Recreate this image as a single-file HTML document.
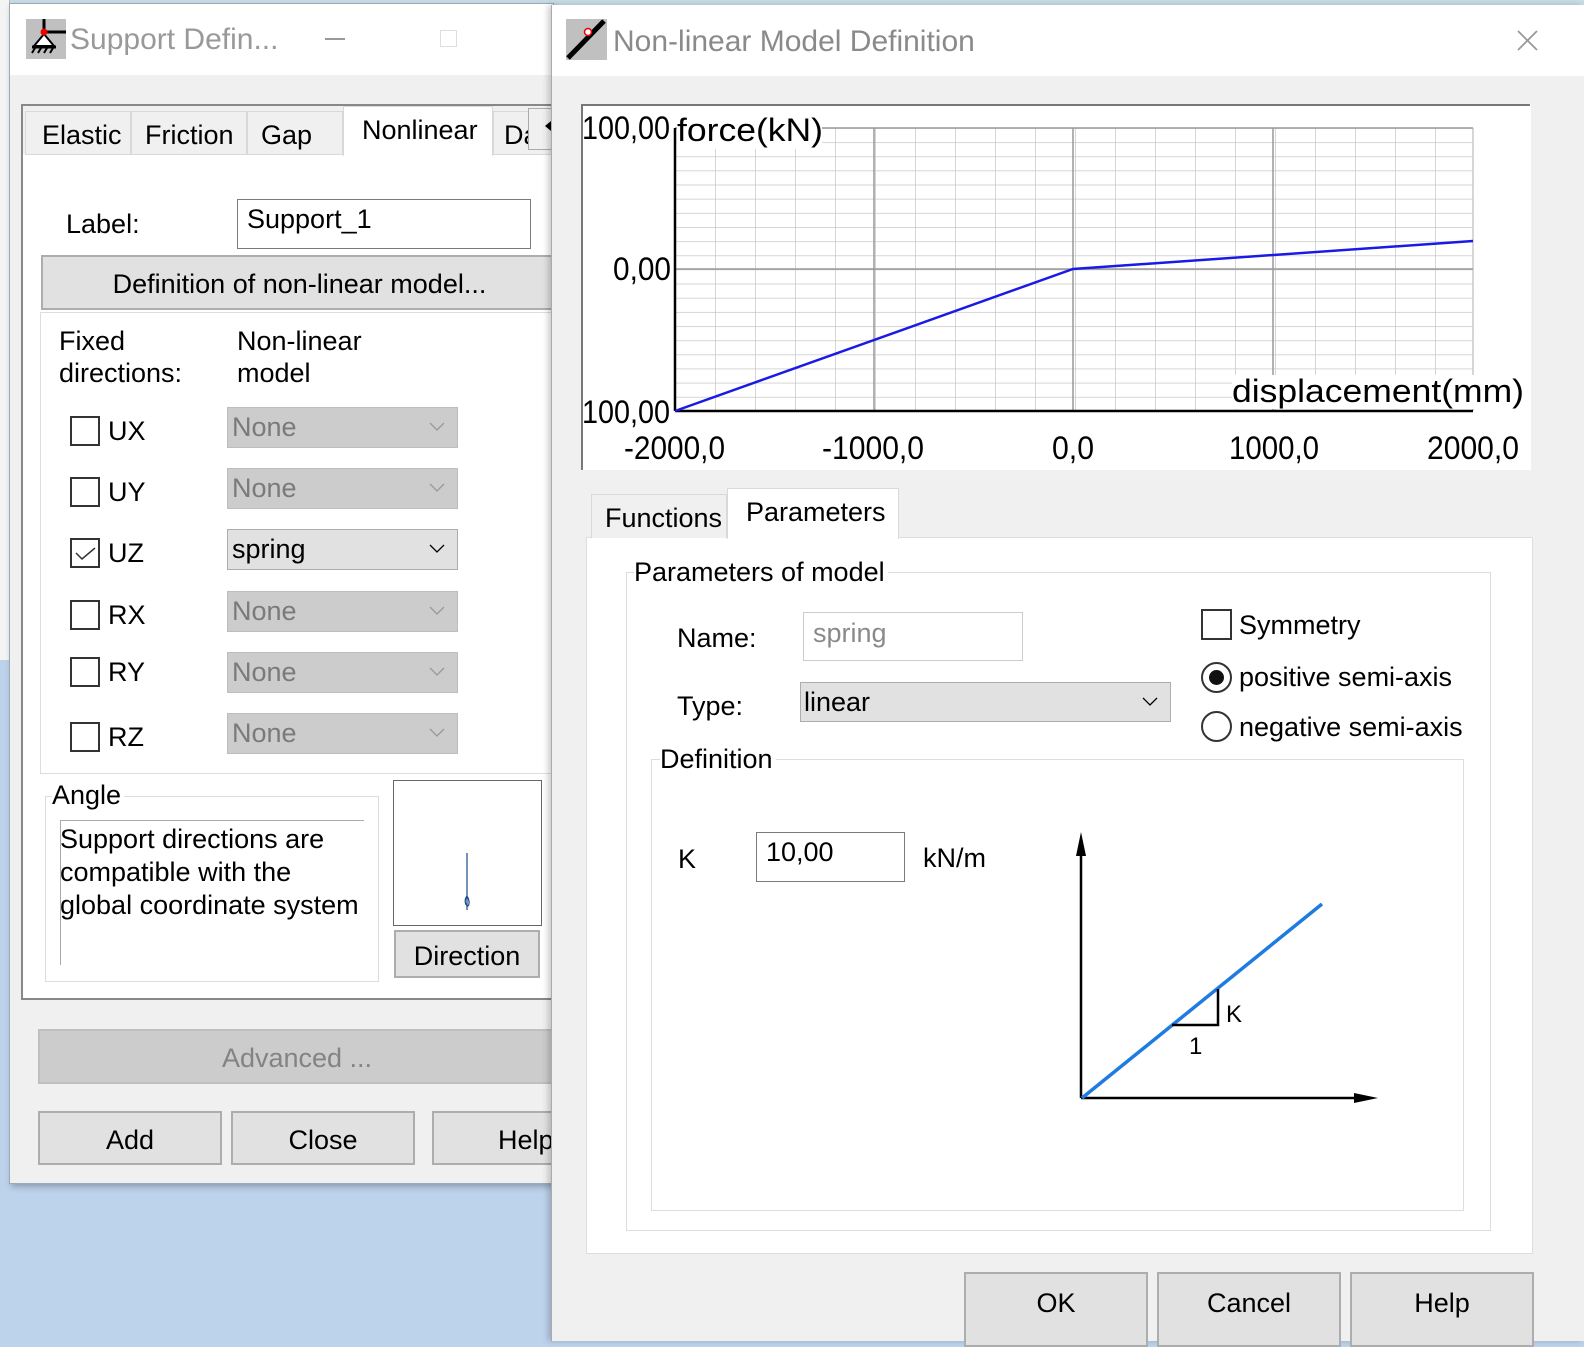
<!DOCTYPE html>
<html><head><meta charset="utf-8">
<style>
*{box-sizing:border-box;margin:0;padding:0}
body{width:1584px;height:1341px;position:relative;overflow:hidden;background:#bdd3ec;font-family:"Liberation Sans",sans-serif;font-size:27px;color:#000}
.a{position:absolute}
.t{position:absolute;white-space:nowrap;line-height:1}
.btn{position:absolute;background:#e1e1e1;border:2px solid #adadad;text-align:center}
.cb{position:absolute;width:30px;height:30px;border:2px solid #333;background:#fff}
.dd{position:absolute;width:231px;height:41px;background:#cccccc;border:1px solid #bdbdbd;color:#7a7a7a;font-size:27px;padding:4px 4px}
.dd svg{position:absolute;right:12px;top:14px}
</style></head><body>
<div class="a" style="left:0;top:0;width:1584px;height:6px;background:#c9dde6"></div>
<div class="a" style="left:0;top:0;width:10px;height:660px;background:#f4f4f4;border-right:1px solid #bbb"></div>

<div class="a" style="left:9px;top:3px;width:545px;height:1181px;background:#f0f0f0;border:1px solid #9ab;box-shadow:2px 3px 6px rgba(0,0,0,.25)"></div>
<div class="a" style="left:10px;top:4px;width:542px;height:71px;background:#fff"></div>
<svg class="a" style="left:26px;top:19px" width="40" height="40" viewBox="0 0 40 40"><rect width="40" height="40" fill="#c0c0c0"/><path d="M18 0V14M18 13H40" stroke="#000" stroke-width="3"/><path d="M8 27L18 15 28 27Z" fill="#fff" stroke="#000" stroke-width="2"/><path d="M6 28H30" stroke="#000" stroke-width="3"/><path d="M9 29l-3 5M15 29l-3 5M21 29l-3 5M27 29l-3 5" stroke="#000" stroke-width="2"/><circle cx="18" cy="13" r="3.5" fill="#e00"/></svg>
<div class="t" style="left:70px;top:25px;font-size:30px;color:#999">Support Defin...</div>
<div class="a" style="left:325px;top:38px;width:20px;height:2px;background:#999"></div>
<div class="a" style="left:440px;top:30px;width:17px;height:17px;border:1px solid #ddd"></div>

<div class="a" style="left:21px;top:104px;width:533px;height:896px;border:2px solid #888;border-right:none;background:#fff"></div>
<div class="a" style="left:23px;top:106px;width:531px;height:48px;background:#f0f0f0"></div>
<div class="a" style="left:25px;top:111px;width:106px;height:44px;background:#f0f0f0;border:1px solid #d9d9d9"></div>
<div class="a" style="left:131px;top:111px;width:116px;height:44px;background:#f0f0f0;border:1px solid #d9d9d9"></div>
<div class="a" style="left:247px;top:111px;width:96px;height:44px;background:#f0f0f0;border:1px solid #d9d9d9"></div>
<div class="a" style="left:343px;top:106px;width:150px;height:50px;background:#fff;border:1px solid #d9d9d9;border-bottom:none"></div>
<div class="a" style="left:493px;top:111px;width:61px;height:44px;background:#f0f0f0;border:1px solid #d9d9d9"></div>
<div class="a" style="left:528px;top:108px;width:26px;height:42px;background:#f0f0f0;border:1px solid #aaa"></div>
<div class="a" style="left:545px;top:121px;width:0;height:0;border:5px solid transparent;border-right:6px solid #000;border-left:none"></div>
<div class="t" style="left:42px;top:122px">Elastic</div>
<div class="t" style="left:145px;top:122px">Friction</div>
<div class="t" style="left:261px;top:122px">Gap</div>
<div class="t" style="left:362px;top:117px">Nonlinear</div>
<div class="t" style="left:504px;top:122px;width:24px;overflow:hidden">Da</div>

<div class="t" style="left:66px;top:211px">Label:</div>
<div class="a" style="left:237px;top:199px;width:294px;height:50px;border:1px solid #7a7a7a;background:#fff"></div>
<div class="t" style="left:247px;top:206px">Support_1</div>
<div class="btn" style="left:41px;top:255px;width:515px;height:55px;border-right:none"><div style="margin-top:12px">Definition of non-linear model...</div></div>

<div class="a" style="left:40px;top:312px;width:516px;height:462px;border:1px solid #ddd;border-right:none"></div>
<div class="t" style="left:59px;top:325px;line-height:32px">Fixed<br>directions:</div>
<div class="t" style="left:237px;top:325px;line-height:32px">Non-linear<br>model</div>

<div class="cb" style="left:70px;top:416px"></div><div class="t" style="left:108px;top:418px">UX</div>
<div class="dd" style="left:227px;top:407px">None<svg width="16" height="9"><path d="M1 1l7 7 7-7" fill="none" stroke="#999" stroke-width="1.3"/></svg></div>
<div class="cb" style="left:70px;top:477px"></div><div class="t" style="left:108px;top:479px">UY</div>
<div class="dd" style="left:227px;top:468px">None<svg width="16" height="9"><path d="M1 1l7 7 7-7" fill="none" stroke="#999" stroke-width="1.3"/></svg></div>
<div class="cb" style="left:70px;top:538px"><svg width="26" height="26" style="position:absolute;left:0;top:0"><path d="M4 13l6 6 13-11" fill="none" stroke="#333" stroke-width="1.5"/></svg></div><div class="t" style="left:108px;top:540px">UZ</div>
<div class="dd" style="left:227px;top:529px;background:#e1e1e1;border-color:#adadad;color:#000">spring<svg width="16" height="9"><path d="M1 1l7 7 7-7" fill="none" stroke="#000" stroke-width="1.3"/></svg></div>
<div class="cb" style="left:70px;top:600px"></div><div class="t" style="left:108px;top:602px">RX</div>
<div class="dd" style="left:227px;top:591px">None<svg width="16" height="9"><path d="M1 1l7 7 7-7" fill="none" stroke="#999" stroke-width="1.3"/></svg></div>
<div class="cb" style="left:70px;top:657px"></div><div class="t" style="left:108px;top:659px">RY</div>
<div class="dd" style="left:227px;top:652px">None<svg width="16" height="9"><path d="M1 1l7 7 7-7" fill="none" stroke="#999" stroke-width="1.3"/></svg></div>
<div class="cb" style="left:70px;top:722px"></div><div class="t" style="left:108px;top:724px">RZ</div>
<div class="dd" style="left:227px;top:713px">None<svg width="16" height="9"><path d="M1 1l7 7 7-7" fill="none" stroke="#999" stroke-width="1.3"/></svg></div>

<div class="a" style="left:45px;top:796px;width:334px;height:186px;border:1px solid #ddd"></div>
<div class="t" style="left:52px;top:782px;background:#fff;padding-right:3px">Angle</div>
<div class="a" style="left:60px;top:820px;width:304px;height:145px;border-top:1px solid #aaa;border-left:1px solid #aaa"></div>
<div class="t" style="left:60px;top:823px;line-height:33px">Support directions are<br>compatible with the<br>global coordinate system</div>
<div class="a" style="left:393px;top:780px;width:149px;height:146px;border:1px solid #666;background:#fff"></div>
<svg class="a" style="left:462px;top:852px" width="12" height="60"><path d="M5 1V58M5 44c-3 4-2 9 1 10 2-2 1-7-1-10" fill="none" stroke="#1a4a8a" stroke-width="1.2"/></svg>
<div class="btn" style="left:394px;top:930px;width:146px;height:48px"><div style="margin-top:9px">Direction</div></div>

<div class="btn" style="left:38px;top:1029px;width:516px;height:55px;background:#cccccc;border-color:#bfbfbf;border-right:none;color:#838383"><div style="margin-top:12px">Advanced ...</div></div>
<div class="btn" style="left:38px;top:1111px;width:184px;height:54px"><div style="margin-top:12px">Add</div></div>
<div class="btn" style="left:231px;top:1111px;width:184px;height:54px"><div style="margin-top:12px">Close</div></div>
<div class="btn" style="left:432px;top:1111px;width:124px;height:54px;border-right:none;text-align:left;padding-left:64px"><div style="margin-top:12px">Help</div></div>

<div class="a" style="left:551px;top:5px;width:1033px;height:1336px;background:#f0f0f0;border-left:1px solid #aaa;box-shadow:-3px 0 6px rgba(0,0,0,.2)"></div>
<div class="a" style="left:552px;top:5px;width:1032px;height:71px;background:#fff"></div>
<svg class="a" style="left:566px;top:19px" width="41" height="41" viewBox="0 0 41 41"><rect width="41" height="41" fill="#c0c0c0"/><path d="M2 39L38 2" stroke="#000" stroke-width="5"/><circle cx="22" cy="13" r="3.5" fill="#fff" stroke="#e00" stroke-width="1.5"/></svg>
<div class="t" style="left:613px;top:27px;font-size:30px;color:#8a8a8a">Non-linear Model Definition</div>
<svg class="a" style="left:1517px;top:30px" width="21" height="21"><path d="M1 1L20 20M20 1L1 20" stroke="#999" stroke-width="1.8"/></svg>

<svg class="a" style="left:581px;top:104px" width="950" height="366" viewBox="581 104 950 366">
<defs><pattern id="g" x="675" y="128" width="40" height="14.15" patternUnits="userSpaceOnUse"><path d="M0 0V14.15M0 0H40" stroke="#c8c8c8" stroke-width="1.5" fill="none"/></pattern></defs>
<rect x="581" y="104" width="950" height="366" fill="#fff"/>
<path d="M581 105H1530M582 104V470" stroke="#777" stroke-width="2"/>
<rect x="675" y="128" width="798" height="283" fill="url(#g)"/>
<path d="M1473 128V411" stroke="#c8c8c8" stroke-width="1.5"/>
<path d="M874 128V411M1073 128V411M1273 128V411M675 128H1473M675 269H1473" stroke="#999" stroke-width="1.5"/>
<path d="M675 128V411M675 411H1473" stroke="#000" stroke-width="2.5"/>
<rect x="677" y="115" width="145" height="34" fill="#fff"/>
<rect x="1232" y="375" width="292" height="34" fill="#fff"/>
<polyline points="675,411 1073,269 1473,241" fill="none" stroke="#1a1ae6" stroke-width="2.5"/>
<g font-family="Liberation Sans Narrow, Liberation Sans, sans-serif" font-size="32">
<text x="582" y="139" textLength="88" lengthAdjust="spacingAndGlyphs">100,00</text>
<text x="677" y="141" textLength="146" lengthAdjust="spacingAndGlyphs">force(kN)</text>
<text x="613" y="280" textLength="58" lengthAdjust="spacingAndGlyphs">0,00</text>
<text x="582" y="423" textLength="88" lengthAdjust="spacingAndGlyphs">100,00</text>
<text x="1232" y="402" textLength="292" lengthAdjust="spacingAndGlyphs">displacement(mm)</text>
<text x="624" y="459" textLength="101" lengthAdjust="spacingAndGlyphs">-2000,0</text>
<text x="822" y="459" textLength="102" lengthAdjust="spacingAndGlyphs">-1000,0</text>
<text x="1052" y="459" textLength="42" lengthAdjust="spacingAndGlyphs">0,0</text>
<text x="1229" y="459" textLength="90" lengthAdjust="spacingAndGlyphs">1000,0</text>
<text x="1427" y="459" textLength="92" lengthAdjust="spacingAndGlyphs">2000,0</text>
</g></svg>

<div class="a" style="left:586px;top:537px;width:947px;height:717px;background:#fff;border:1px solid #ddd"></div>
<div class="a" style="left:591px;top:494px;width:136px;height:44px;background:#f0f0f0;border:1px solid #d9d9d9;border-bottom:none"></div>
<div class="a" style="left:727px;top:488px;width:172px;height:51px;background:#fff;border:1px solid #d9d9d9;border-bottom:none"></div>
<div class="t" style="left:605px;top:505px">Functions</div>
<div class="t" style="left:746px;top:499px">Parameters</div>

<div class="a" style="left:626px;top:572px;width:865px;height:659px;border:1px solid #ddd"></div>
<div class="t" style="left:634px;top:559px;background:#fff;padding-right:3px">Parameters of model</div>
<div class="t" style="left:677px;top:625px">Name:</div>
<div class="a" style="left:803px;top:612px;width:220px;height:49px;border:1px solid #ccc;background:#fff"></div>
<div class="t" style="left:813px;top:620px;color:#8a8a8a">spring</div>
<div class="t" style="left:677px;top:693px">Type:</div>
<div class="a" style="left:800px;top:682px;width:371px;height:40px;background:#e1e1e1;border:1px solid #adadad"></div>
<div class="t" style="left:804px;top:689px">linear</div>
<svg class="a" style="left:1142px;top:697px" width="16" height="10"><path d="M1 1l7 7 7-7" fill="none" stroke="#000" stroke-width="1.3"/></svg>
<div class="cb" style="left:1201px;top:609px;width:31px;height:31px"></div>
<div class="t" style="left:1239px;top:612px">Symmetry</div>
<div class="a" style="left:1201px;top:662px;width:31px;height:31px;border:2px solid #333;border-radius:50%;background:#fff"><div class="a" style="left:6px;top:6px;width:15px;height:15px;border-radius:50%;background:#111"></div></div>
<div class="t" style="left:1239px;top:664px">positive semi-axis</div>
<div class="a" style="left:1201px;top:711px;width:31px;height:31px;border:2px solid #333;border-radius:50%;background:#fff"></div>
<div class="t" style="left:1239px;top:714px">negative semi-axis</div>

<div class="a" style="left:651px;top:759px;width:813px;height:452px;border:1px solid #ddd"></div>
<div class="t" style="left:660px;top:746px;background:#fff;padding-right:3px">Definition</div>
<div class="t" style="left:678px;top:846px">K</div>
<div class="a" style="left:756px;top:832px;width:149px;height:50px;border:1px solid #7a7a7a;background:#fff"></div>
<div class="t" style="left:766px;top:839px">10,00</div>
<div class="t" style="left:923px;top:845px">kN/m</div>

<svg class="a" style="left:1060px;top:820px" width="340" height="300">
<path d="M21 278V20M21 278H305" stroke="#000" stroke-width="2.5"/>
<path d="M21 12L16 36H26Z" fill="#000"/>
<path d="M318 278L294 273V283Z" fill="#000"/>
<path d="M22 278L262 84" stroke="#1e7be0" stroke-width="3.5"/>
<path d="M112 205H158V169" fill="none" stroke="#000" stroke-width="2.5"/>
<text x="166" y="202" font-size="24" font-family="Liberation Sans,sans-serif">K</text>
<text x="129" y="234" font-size="24" font-family="Liberation Sans,sans-serif">1</text>
</svg>

<div class="btn" style="left:964px;top:1272px;width:184px;height:75px"><div style="margin-top:14px">OK</div></div>
<div class="btn" style="left:1157px;top:1272px;width:184px;height:75px"><div style="margin-top:14px">Cancel</div></div>
<div class="btn" style="left:1350px;top:1272px;width:184px;height:75px"><div style="margin-top:14px">Help</div></div>
</body></html>
